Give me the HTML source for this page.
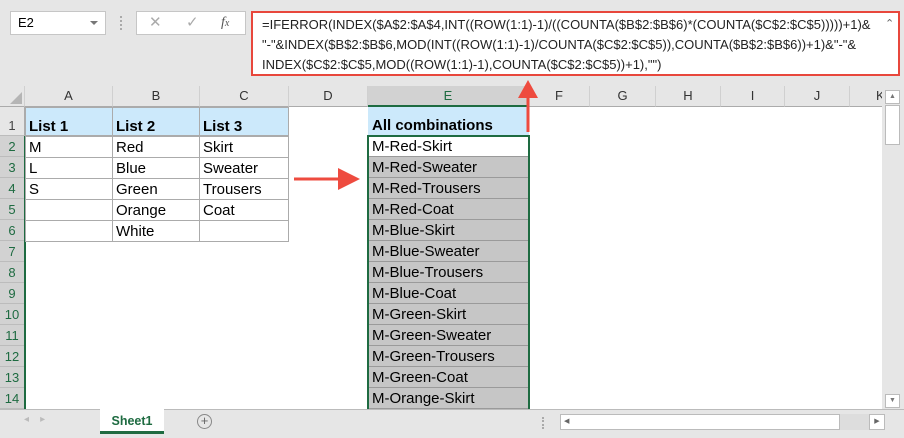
<!DOCTYPE html><html><head><style>
*{margin:0;padding:0;box-sizing:border-box}
body{width:904px;height:438px;overflow:hidden;background:#fff;font-family:"Liberation Sans",Arial,sans-serif;position:relative}
.a{position:absolute}
.ch{position:absolute;top:86px;height:21px;border-right:1px solid #d0d0d0;border-bottom:1px solid #ababab;background:#e6e6e6;text-align:center;font-size:13px;line-height:20px;color:#333}
.rh{position:absolute;left:0;width:25px;height:21px;border-bottom:1px solid #bcbcbc;border-right:1px solid #ababab;background:#e6e6e6;text-align:center;font-size:13px;line-height:22px;color:#444}
.rh.s{background:#d2d2d2;color:#1e6b41}
.c{position:absolute;height:22px;border:1px solid #ababab;font-size:15px;line-height:21px;padding-left:3px;color:#000;margin:-1px 0 0 -1px;white-space:nowrap}
.e{position:absolute;left:369px;width:159px;height:21px;background:#c6c6c6;border-bottom:1px solid #9a9a9a;font-size:15px;line-height:21px;padding-left:3px;white-space:nowrap}
</style></head><body>
<div class="a" style="left:0;top:0;width:904px;height:86px;background:#e6e6e6"></div>
<div class="a" style="left:10px;top:11px;width:96px;height:24px;background:#fff;border:1px solid #c6c6c6;font-size:13px;line-height:22px;padding-left:7px">E2<span style="position:absolute;right:7px;top:9px;border-left:4px solid transparent;border-right:4px solid transparent;border-top:4px solid #777"></span></div>
<div class="a" style="left:120px;top:16px;width:2px;height:14px;border-left:2px dotted #aaa"></div>
<div class="a" style="left:136px;top:11px;width:110px;height:24px;background:#fff;border:1px solid #c6c6c6;font-size:15px;color:#aaa;line-height:22px"><span style="position:absolute;left:12px">✕</span><span style="position:absolute;left:49px">✓</span><span style="position:absolute;left:84px;font-family:'Liberation Serif',serif;font-style:italic;color:#555;font-size:14px">f<span style="font-size:10px">x</span></span></div>
<div class="a" style="left:251px;top:11px;width:649px;height:65px;background:#fff;border:2px solid #e8473c;font-size:13px;line-height:20px;padding:2px 0 0 9px;color:#222;white-space:nowrap">=IFERROR(INDEX($A$2:$A$4,INT((ROW(1:1)-1)/((COUNTA($B$2:$B$6)*(COUNTA($C$2:$C$5)))))+1)&amp;<br>"-"&amp;INDEX($B$2:$B$6,MOD(INT((ROW(1:1)-1)/COUNTA($C$2:$C$5)),COUNTA($B$2:$B$6))+1)&amp;"-"&amp;<br>INDEX($C$2:$C$5,MOD((ROW(1:1)-1),COUNTA($C$2:$C$5))+1),"")</div>
<div class="a" style="left:885px;top:17px;font-size:11px;color:#666">⌃</div>
<div class="ch" style="left:0;width:25px"><span style="position:absolute;right:2px;bottom:2px;border-left:12px solid transparent;border-bottom:12px solid #b5b5b5"></span></div>
<div class="ch" style="left:25px;width:88px">A</div>
<div class="ch" style="left:113px;width:87px">B</div>
<div class="ch" style="left:200px;width:89px">C</div>
<div class="ch" style="left:289px;width:79px">D</div>
<div class="ch" style="left:368px;width:161px;background:#d2d2d2;color:#1e6b41;border-bottom:2px solid #1e6b41">E</div>
<div class="ch" style="left:529px;width:61px">F</div>
<div class="ch" style="left:590px;width:66px">G</div>
<div class="ch" style="left:656px;width:65px">H</div>
<div class="ch" style="left:721px;width:64px">I</div>
<div class="ch" style="left:785px;width:65px">J</div>
<div class="ch" style="left:850px;width:35px;text-align:left;padding-left:26px">K</div>
<div class="rh" style="top:107px;height:29px;line-height:38px">1</div>
<div class="rh s" style="top:136px">2</div><div class="rh s" style="top:157px">3</div><div class="rh s" style="top:178px">4</div><div class="rh s" style="top:199px">5</div><div class="rh s" style="top:220px">6</div><div class="rh s" style="top:241px">7</div><div class="rh s" style="top:262px">8</div><div class="rh s" style="top:283px">9</div><div class="rh s" style="top:304px">10</div><div class="rh s" style="top:325px">11</div><div class="rh s" style="top:346px">12</div><div class="rh s" style="top:367px">13</div><div class="rh s" style="top:388px">14</div>
<div class="a" style="left:24px;top:136px;width:2px;height:273px;background:#1e6b41"></div>
<div class="c" style="left:26px;top:108px;width:88px;height:29px;background:#cce9fb;font-weight:bold;line-height:38px">List 1</div>
<div class="c" style="left:113px;top:108px;width:88px;height:29px;background:#cce9fb;font-weight:bold;line-height:38px">List 2</div>
<div class="c" style="left:200px;top:108px;width:90px;height:29px;background:#cce9fb;font-weight:bold;line-height:38px">List 3</div>
<div class="c" style="left:26px;top:137px;width:88px">M</div><div class="c" style="left:113px;top:137px;width:88px">Red</div><div class="c" style="left:200px;top:137px;width:90px">Skirt</div>
<div class="c" style="left:26px;top:158px;width:88px">L</div><div class="c" style="left:113px;top:158px;width:88px">Blue</div><div class="c" style="left:200px;top:158px;width:90px">Sweater</div>
<div class="c" style="left:26px;top:179px;width:88px">S</div><div class="c" style="left:113px;top:179px;width:88px">Green</div><div class="c" style="left:200px;top:179px;width:90px">Trousers</div>
<div class="c" style="left:26px;top:200px;width:88px"></div><div class="c" style="left:113px;top:200px;width:88px">Orange</div><div class="c" style="left:200px;top:200px;width:90px">Coat</div>
<div class="c" style="left:26px;top:221px;width:88px"></div><div class="c" style="left:113px;top:221px;width:88px">White</div><div class="c" style="left:200px;top:221px;width:90px"></div>
<div class="a" style="left:368px;top:107px;width:161px;height:29px;background:#cce9fb;font-weight:bold;font-size:15px;line-height:38px;padding-left:4px">All combinations</div>
<div class="e" style="top:136px;background:#fff">M-Red-Skirt</div>
<div class="e" style="top:157px">M-Red-Sweater</div><div class="e" style="top:178px">M-Red-Trousers</div><div class="e" style="top:199px">M-Red-Coat</div><div class="e" style="top:220px">M-Blue-Skirt</div><div class="e" style="top:241px">M-Blue-Sweater</div><div class="e" style="top:262px">M-Blue-Trousers</div><div class="e" style="top:283px">M-Blue-Coat</div><div class="e" style="top:304px">M-Green-Skirt</div><div class="e" style="top:325px">M-Green-Sweater</div><div class="e" style="top:346px">M-Green-Trousers</div><div class="e" style="top:367px">M-Green-Coat</div><div class="e" style="top:388px">M-Orange-Skirt</div>
<div class="a" style="left:367px;top:135px;width:163px;height:276px;border:2px solid #1e6b41;border-bottom:none"></div>
<svg class="a" style="left:0;top:0" width="904" height="438"><g fill="#ee4b3f" stroke="#ee4b3f"><line x1="294" y1="179" x2="342" y2="179" stroke-width="3"/><polygon points="338,168 360,179 338,190" stroke="none"/><line x1="528" y1="132" x2="528" y2="96" stroke-width="3"/><polygon points="518,98 528,80 538,98" stroke="none"/></g></svg>
<div class="a" style="left:882px;top:86px;width:22px;height:323px;background:#e6e6e6"></div>
<div class="a" style="left:885px;top:90px;width:15px;height:14px;background:#fff;border:1px solid #bbb;font-size:7px;text-align:center;line-height:12px;color:#777">▲</div>
<div class="a" style="left:885px;top:105px;width:15px;height:40px;background:#fff;border:1px solid #bbb"></div>
<div class="a" style="left:885px;top:394px;width:15px;height:14px;background:#fff;border:1px solid #bbb;font-size:7px;text-align:center;line-height:12px;color:#777">▼</div>
<div class="a" style="left:0;top:409px;width:904px;height:29px;background:#e6e6e6;border-top:1px solid #bbb"></div>
<div class="a" style="left:24px;top:414px;font-size:10px;color:#bbb">◂&nbsp;&nbsp;&nbsp;&nbsp;▸</div>
<div class="a" style="left:100px;top:409px;width:64px;height:25px;background:#fff;border-bottom:3px solid #1e6b41;font-weight:bold;font-size:12.5px;color:#1e6b41;text-align:center;line-height:24px">Sheet1</div>
<div class="a" style="left:197px;top:414px;width:15px;height:15px;border:1px solid #888;border-radius:50%;font-size:13px;line-height:12px;text-align:center;color:#666">+</div>
<div class="a" style="left:542px;top:417px;width:2px;height:12px;border-left:2px dotted #aaa"></div>
<div class="a" style="left:560px;top:414px;width:280px;height:16px;background:#fff;border:1px solid #bbb;font-size:7px;line-height:14px;color:#666;padding-left:3px">◀</div>
<div class="a" style="left:840px;top:414px;width:29px;height:16px;background:#ddd"></div>
<div class="a" style="left:869px;top:414px;width:16px;height:16px;background:#fff;border:1px solid #bbb;font-size:7px;text-align:center;line-height:14px;color:#666">▶</div>
</body></html>
